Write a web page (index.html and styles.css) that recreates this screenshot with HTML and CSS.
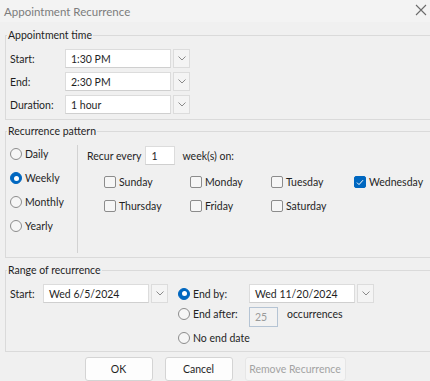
FILE: index.html
```html
<!DOCTYPE html>
<html lang="en">
<head>
    <meta charset="UTF-8">
    <meta name="viewport" content="width=device-width, initial-scale=1.0">
    <title>Appointment Recurrence</title>
    <link rel="stylesheet" href="styles.css">
</head>
<body>
    <div class="dialog">
        <div class="titlebar">
            <span class="title">Appointment Recurrence</span>
            <svg class="close" width="12" height="12" viewBox="0 0 12 12">
                <path d="M1 1 L11 11 M11 1 L1 11" stroke="#6b6b6b" stroke-width="1.1" fill="none"/>
            </svg>
        </div>

        <fieldset class="group group-time">
            <legend>Appointment time</legend>
            <div class="time-rows">
                <div class="row">
                    <span class="label label-time">Start:</span>
                    <span class="input input-time">1:30 PM</span>
                    <span class="drop"><svg width="8" height="5" viewBox="0 0 8 5"><path d="M0.5 0.5 L4 4 L7.5 0.5" stroke="#8a8a8a" fill="none"/></svg></span>
                </div>
                <div class="row">
                    <span class="label label-time">End:</span>
                    <span class="input input-time">2:30 PM</span>
                    <span class="drop"><svg width="8" height="5" viewBox="0 0 8 5"><path d="M0.5 0.5 L4 4 L7.5 0.5" stroke="#8a8a8a" fill="none"/></svg></span>
                </div>
                <div class="row">
                    <span class="label label-time">Duration:</span>
                    <span class="input input-time">1 hour</span>
                    <span class="drop"><svg width="8" height="5" viewBox="0 0 8 5"><path d="M0.5 0.5 L4 4 L7.5 0.5" stroke="#8a8a8a" fill="none"/></svg></span>
                </div>
            </div>
        </fieldset>

        <fieldset class="group group-pattern">
            <legend>Recurrence pattern</legend>
            <div class="pattern">
                <div class="freq">
                    <label class="radio-item"><span class="radio"></span>Daily</label>
                    <label class="radio-item"><span class="radio checked"></span>Weekly</label>
                    <label class="radio-item"><span class="radio"></span>Monthly</label>
                    <label class="radio-item"><span class="radio"></span>Yearly</label>
                </div>
                <div class="weekly">
                    <div class="recur-row">
                        <span>Recur every</span>
                        <span class="input input-num">1</span>
                        <span>week(s) on:</span>
                    </div>
                    <div class="days">
                        <label class="check-item"><span class="check"></span>Sunday</label>
                        <label class="check-item"><span class="check"></span>Monday</label>
                        <label class="check-item"><span class="check"></span>Tuesday</label>
                        <label class="check-item"><span class="check checked"><svg width="8" height="7" viewBox="0 0 8 7"><path d="M1 3.6 L3 5.6 L7 1.2" stroke="#ffffff" stroke-width="1" fill="none"/></svg></span>Wednesday</label>
                        <label class="check-item"><span class="check"></span>Thursday</label>
                        <label class="check-item"><span class="check"></span>Friday</label>
                        <label class="check-item"><span class="check"></span>Saturday</label>
                    </div>
                </div>
            </div>
        </fieldset>

        <fieldset class="group group-range">
            <legend>Range of recurrence</legend>
            <div class="range">
                <div class="range-start">
                    <span class="label label-start">Start:</span>
                    <span class="input input-date">Wed 6/5/2024</span>
                    <span class="drop"><svg width="8" height="5" viewBox="0 0 8 5"><path d="M0.5 0.5 L4 4 L7.5 0.5" stroke="#8a8a8a" fill="none"/></svg></span>
                </div>
                <div class="range-end">
                    <div class="row end-by">
                        <label class="radio-item radio-fixed"><span class="radio checked"></span>End by:</label>
                        <span class="input input-end">Wed 11/20/2024</span>
                        <span class="drop"><svg width="8" height="5" viewBox="0 0 8 5"><path d="M0.5 0.5 L4 4 L7.5 0.5" stroke="#8a8a8a" fill="none"/></svg></span>
                    </div>
                    <div class="row end-after">
                        <label class="radio-item radio-fixed radio-raised"><span class="radio"></span>End after:</label>
                        <span class="input input-count">25</span>
                        <span class="occurrences">occurrences</span>
                    </div>
                    <div class="row no-end">
                        <label class="radio-item"><span class="radio"></span>No end date</label>
                    </div>
                </div>
            </div>
        </fieldset>

        <div class="buttons">
            <button class="btn btn-ok">OK</button>
            <button class="btn btn-ok">Cancel</button>
            <button class="btn btn-remove" disabled>Remove Recurrence</button>
        </div>
    </div>
</body>
</html>
```

FILE: styles.css
```css
* {
    margin: 0;
    padding: 0;
    box-sizing: border-box;
}

body {
    background: #f0f0f0;
    font-family: Lato, 'Liberation Sans', sans-serif;
    font-size: 10.5px;
    color: #1f1f1f;
    overflow: hidden;
}

.dialog {
    width: 430px;
    height: 381px;
    overflow: hidden;
}

.titlebar {
    height: 22px;
    background: #f3f3f3;
    display: flex;
    align-items: center;
    justify-content: space-between;
    padding: 0 3px 0 4px;
}

.title {
    font-size: 11.5px;
    color: #7c7c7c;
}

.close {
    margin-bottom: 3px;
}

/* group boxes */

.group {
    border: 1px solid #dadada;
    margin: 0 -10px 0 5px;
    padding: 0;
}

.group legend {
    line-height: 14px;
    padding: 0 1px;
    margin-left: 1px;
}

.group-time {
    margin-top: 6px;
}

.group-pattern {
    margin-top: 4px;
}

.group-range {
    margin-top: 5px;
}

.row {
    display: flex;
    align-items: center;
}

.label-time {
    width: 55px;
}

.input {
    display: flex;
    align-items: center;
    height: 19px;
    background: #ffffff;
    border: 1px solid #dcdcdc;
    border-bottom-color: #cfcfcf;
    padding: 0 5px;
}

.drop {
    width: 17px;
    height: 19px;
    margin-left: 2px;
    border: 1px solid #dcdcdc;
    background: #f4f4f4;
    display: flex;
    align-items: center;
    justify-content: center;
}

/* appointment time */

.time-rows {
    padding: 7px 0 5px 4px;
    display: flex;
    flex-direction: column;
    gap: 4px;
}

.input-time {
    width: 106px;
}

/* recurrence pattern */

.pattern {
    display: flex;
    height: 108px;
    margin: 7px 0 4px;
}

.freq {
    width: 71px;
    padding: 0 0 0 4px;
    display: flex;
    flex-direction: column;
}

.radio-item {
    display: flex;
    align-items: center;
    height: 24px;
    gap: 3px;
}

.freq .radio-item:first-child {
    margin-top: -3px;
}

.radio {
    width: 12px;
    height: 12px;
    border-radius: 50%;
    border: 1px solid #8c8c8c;
    background: #f6f6f6;
    display: flex;
    align-items: center;
    justify-content: center;
}

.radio.checked {
    border-color: #0067c0;
    background: #0067c0;
}

.radio.checked::after {
    content: '';
    width: 5px;
    height: 5px;
    border-radius: 50%;
    background: #ffffff;
}

.weekly {
    border-left: 1px solid #d2d2d2;
    flex: 1;
    padding-left: 9px;
}

.recur-row {
    display: flex;
    align-items: center;
    height: 19px;
    margin-top: 1px;
}

.input-num {
    width: 30px;
    margin: 0 7px 0 4px;
}

.days {
    display: grid;
    grid-template-columns: 86px 81px 83px auto;
    grid-auto-rows: 24px;
    margin: 5px 0 0 17px;
}

.check-item {
    display: flex;
    align-items: center;
    gap: 3px;
}

.check {
    width: 12px;
    height: 12px;
    border: 1px solid #8c8c8c;
    border-radius: 2px;
    background: #f6f6f6;
    display: flex;
    align-items: center;
    justify-content: center;
}

.check.checked {
    border-color: #0067c0;
    background: #0067c0;
}

/* range of recurrence */

.range {
    display: flex;
    gap: 10px;
    padding: 7px 0 5px 4px;
}

.range-start {
    display: flex;
    align-items: center;
    align-self: flex-start;
}

.label-start {
    width: 33px;
}

.input-date {
    width: 106px;
}

.range-end {
    display: flex;
    flex-direction: column;
}

.end-by {
    height: 19px;
}

.end-after {
    height: 20px;
    margin-top: 4px;
    align-items: flex-start;
}

.no-end {
    height: 16px;
    margin-top: 3px;
}

.radio-fixed {
    width: 71px;
}

.end-by .radio-item,
.no-end .radio-item {
    height: 16px;
}

.radio-raised {
    height: 14px;
}

.input-end {
    width: 106px;
}

.input-count {
    width: 29px;
    height: 20px;
    background: #f2f2f2;
    border: 1px solid #b5c4d4;
    color: #9a9a9a;
}

.occurrences {
    margin: 1px 0 0 9px;
}

/* buttons */

.buttons {
    display: flex;
    justify-content: center;
    gap: 12px;
    margin-top: 5px;
}

.btn {
    font-family: inherit;
    font-size: 10.5px;
    height: 24px;
    border-radius: 3px;
    border: 1px solid #d4d4d4;
    background: #fdfdfd;
    color: #1f1f1f;
}

.btn-ok {
    width: 68px;
}

.btn-remove {
    width: 101px;
    background: #f5f5f5;
    border-color: #e6e6e6;
    color: #a3a3a3;
}
```
